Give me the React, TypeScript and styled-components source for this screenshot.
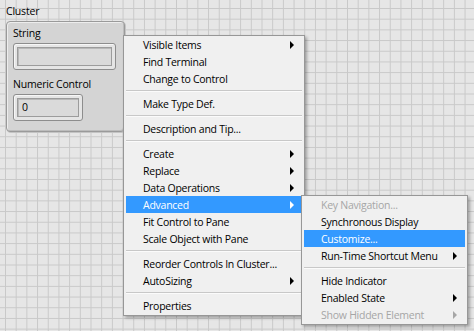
import React from "react";
import styled, { createGlobalStyle } from "styled-components";

type Entry =
  | { kind: "sep" }
  | { kind: "item"; label: string; sub?: boolean; active?: boolean; disabled?: boolean };

const mainItems: Entry[] = [
  { kind: "item", label: "Visible Items", sub: true },
  { kind: "item", label: "Find Terminal" },
  { kind: "item", label: "Change to Control" },
  { kind: "sep" },
  { kind: "item", label: "Make Type Def." },
  { kind: "sep" },
  { kind: "item", label: "Description and Tip..." },
  { kind: "sep" },
  { kind: "item", label: "Create", sub: true },
  { kind: "item", label: "Replace", sub: true },
  { kind: "item", label: "Data Operations", sub: true },
  { kind: "item", label: "Advanced", sub: true, active: true },
  { kind: "item", label: "Fit Control to Pane" },
  { kind: "item", label: "Scale Object with Pane" },
  { kind: "sep" },
  { kind: "item", label: "Reorder Controls In Cluster..." },
  { kind: "item", label: "AutoSizing", sub: true },
  { kind: "sep" },
  { kind: "item", label: "Properties" },
];

const advancedItems: Entry[] = [
  { kind: "item", label: "Key Navigation...", disabled: true },
  { kind: "item", label: "Synchronous Display" },
  { kind: "item", label: "Customize...", active: true },
  { kind: "item", label: "Run-Time Shortcut Menu", sub: true },
  { kind: "sep" },
  { kind: "item", label: "Hide Indicator" },
  { kind: "item", label: "Enabled State", sub: true },
  { kind: "item", label: "Show Hidden Element", sub: true, disabled: true },
];

const GlobalStyle = createGlobalStyle`
  html, body {
    margin: 0;
    padding: 0;
  }
  body {
    font-family: "Open Sans", "Liberation Sans", sans-serif;
  }
`;

const Canvas = styled.div`
  position: relative;
  width: 474px;
  height: 331px;
  overflow: hidden;
  box-sizing: border-box;
  padding: 4px 0 0 6px;
  color: #000;
  background-color: #e6e6e6;
  background-image: linear-gradient(to right, #c9c9c9 1px, transparent 1px),
    linear-gradient(to bottom, #c9c9c9 1px, transparent 1px);
  background-size: 10.7px 10.7px;
  background-position: 5px 8px;
`;

const Caption = styled.div`
  font-size: 10.5px;
  letter-spacing: -0.2px;
  line-height: 15px;
`;

const Cluster = styled.div`
  box-sizing: border-box;
  width: 119px;
  height: 111px;
  margin-top: 2px;
  padding: 4px 0 0 6px;
  border: 1px solid #9a9a9a;
  border-radius: 4px;
  background: #d4d4d4;
  box-shadow: inset 1px 1px 0 #ededed, inset -1px -1px 0 #bcbcbc, 1px 1px 0 #c4c4c4;
`;

const FieldLabel = styled.div`
  font-size: 10.5px;
  letter-spacing: -0.2px;
  line-height: 15px;
  margin-bottom: 2px;
`;

const Field = styled.div<{ $w: number }>`
  box-sizing: border-box;
  width: ${(p) => p.$w}px;
  height: 27px;
  padding: 3px;
  margin-bottom: 7px;
  border: 1px solid #8d8d8d;
  border-radius: 3px;
  background: #e5e5e5;
  box-shadow: inset 1px 1px 0 #f6f6f6;
`;

const Well = styled.div`
  box-sizing: border-box;
  height: 100%;
  padding-left: 4px;
  font-size: 10.5px;
  line-height: 17px;
  border: 1px solid #9c9c9c;
  background: #dadada;
  box-shadow: inset 1px 1px 0 #b9b9b9;
`;

const Menu = styled.div<{ $x: number; $y: number; $w: number }>`
  position: absolute;
  left: ${(p) => p.$x}px;
  top: ${(p) => p.$y}px;
  width: ${(p) => p.$w}px;
  box-sizing: border-box;
  padding: 0 2px 1px;
  background: #f0f0f0;
  border: 1px solid #979797;
  box-shadow: 2px 2px 3px rgba(0, 0, 0, 0.3);
  font-size: 10.5px;
  letter-spacing: -0.25px;
`;

const Item = styled.div<{ $active?: boolean; $disabled?: boolean }>`
  display: flex;
  align-items: center;
  height: 17px;
  padding: 0 8px 0 17px;
  white-space: nowrap;
  background: ${(p) => (p.$active ? "#3399ff" : "transparent")};
  color: ${(p) => (p.$active ? "#fff" : p.$disabled ? "#a6a6a6" : "#000")};
`;

const Arrow = styled.span`
  margin-left: auto;
  width: 0;
  height: 0;
  border-left: 4px solid currentColor;
  border-top: 4px solid transparent;
  border-bottom: 4px solid transparent;
`;

const Separator = styled.div`
  height: 8px;
  display: flex;
  align-items: center;

  &::before {
    content: "";
    flex: 1;
    height: 1px;
    background: #c8c8c8;
    border-bottom: 1px solid #fbfbfb;
  }
`;

const MenuList = ({ items }: { items: Entry[] }) => (
  <>
    {items.map((entry, index) =>
      entry.kind === "sep" ? (
        <Separator key={index} />
      ) : (
        <Item key={index} $active={entry.active} $disabled={entry.disabled}>
          {entry.label}
          {entry.sub && <Arrow />}
        </Item>
      )
    )}
  </>
);

const App = () => {
  return (
    <Canvas>
      <GlobalStyle />
      <Caption>Cluster</Caption>
      <Cluster>
        <FieldLabel>String</FieldLabel>
        <Field $w={103}>
          <Well />
        </Field>
        <FieldLabel>Numeric Control</FieldLabel>
        <Field $w={70}>
          <Well>0</Well>
        </Field>
      </Cluster>

      <Menu $x={123} $y={35} $w={182}>
        <MenuList items={mainItems} />
      </Menu>
      <Menu $x={301} $y={195} $w={167}>
        <MenuList items={advancedItems} />
      </Menu>
    </Canvas>
  );
};

export default App;
